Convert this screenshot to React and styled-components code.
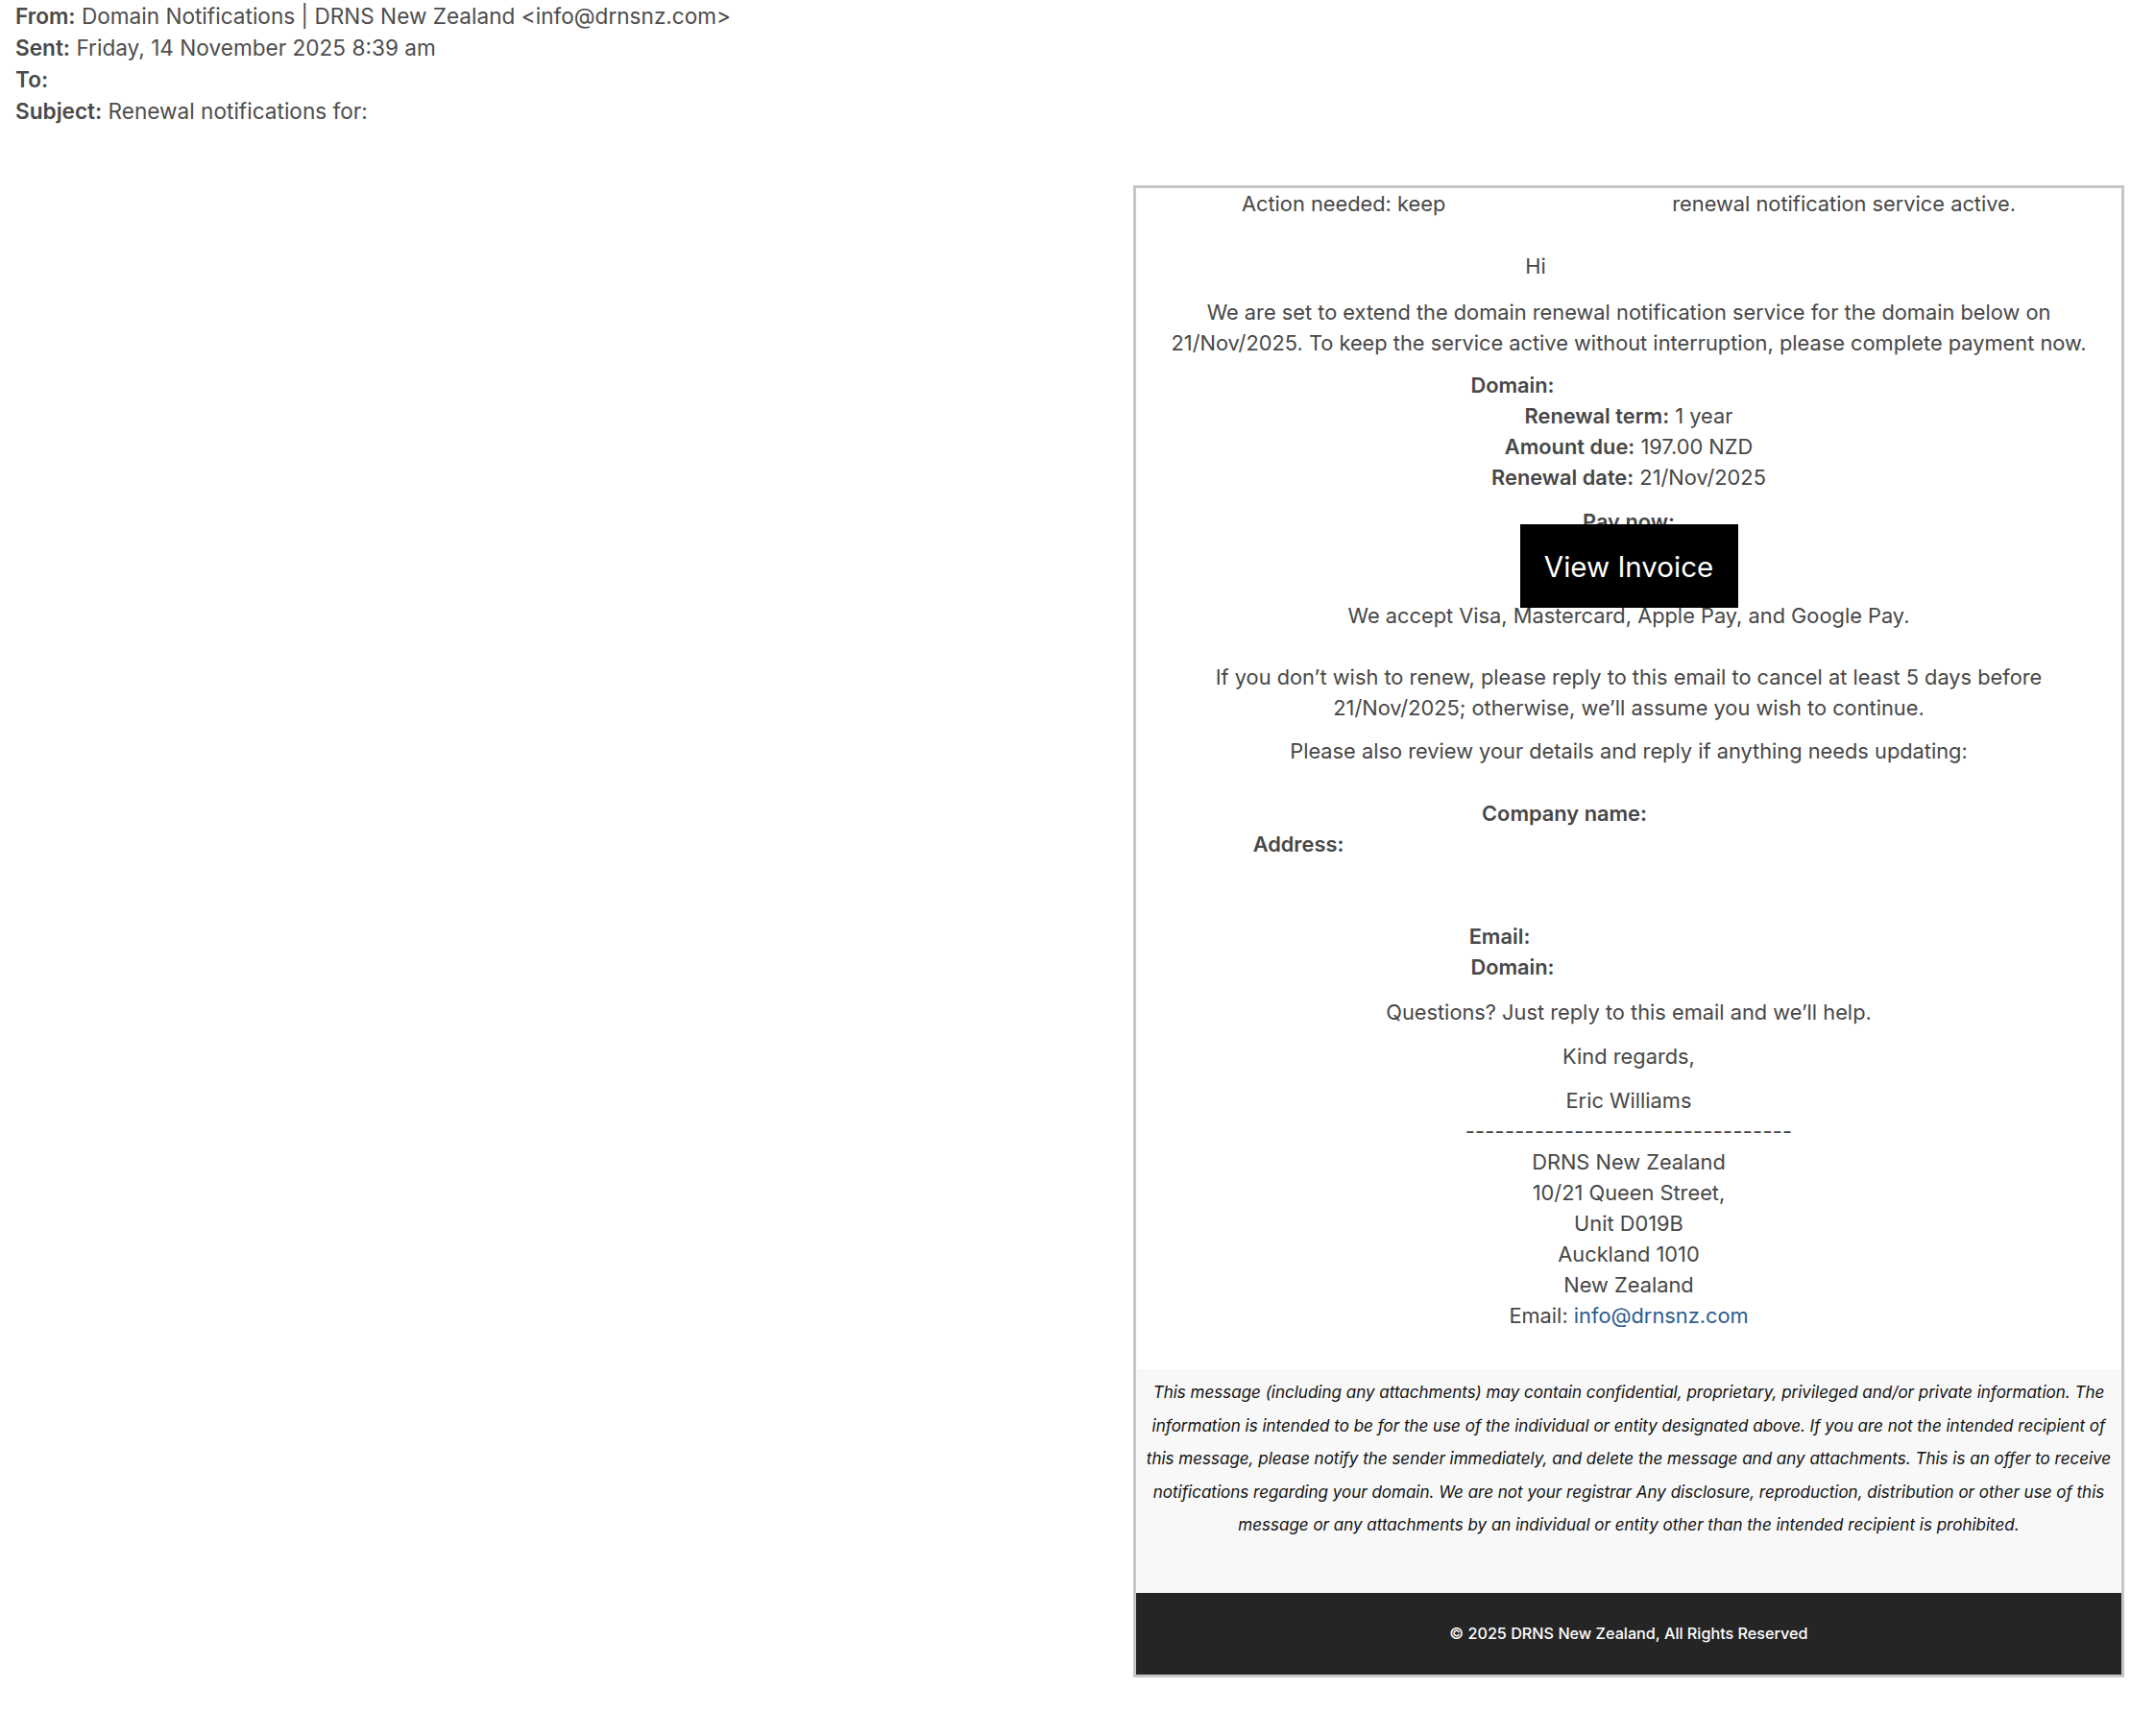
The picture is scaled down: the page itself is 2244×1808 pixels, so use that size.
import React from 'react';
import styled, { createGlobalStyle } from 'styled-components';

const GlobalStyle = createGlobalStyle`
    html, body {
        margin: 0;
        padding: 0;
        background: #ffffff;
    }

    body {
        font-family: Inter, "Liberation Sans", Arial, sans-serif;
        color: #4a4a4a;
    }
`

const Page = styled.div`
    display: flex;
    flex-direction: column;
    padding: 0 32px 60px 16px;
`

const Headers = styled.div`
    font-size: 22.6px;
    line-height: 33px;
    color: #4d4d4d;
`

const HeaderLine = styled.div`
    & > b {
        font-weight: 600;
        color: #4a4a4a;
    }
`

const Panel = styled.div`
    align-self: flex-end;
    width: 1026px;
    margin-top: 61px;
    border: 3px solid #c6c6c6;
    background: #ffffff;
`

const Body = styled.div`
    text-align: center;
    font-size: 21.8px;
    line-height: 32px;
    color: #474747;
    padding-bottom: 36px;
`

const Para = styled.p`
    margin: 0 0 ${p => p.gap || 14}px;
`

const Line = styled.div`
    min-height: 32px;
`

const Label = styled.b`
    font-weight: 600;
`

const Redacted = styled.span`
    display: inline-block;
    width: ${p => p.w}px;
`

const Dashes = styled.div`
    min-height: 32px;
    letter-spacing: 0.3px;
`

const PayNow = styled.div`
    height: 32px;
    margin-top: 14px;
    font-weight: 600;
`

const InvoiceButton = styled.a`
    position: relative;
    display: inline-flex;
    align-items: center;
    justify-content: center;
    width: 227px;
    height: 87px;
    margin: -13px auto -8px;
    background: #000000;
    color: #ffffff;
    font-size: 29.5px;
    text-decoration: none;
`

const ButtonRow = styled.div`
    display: flex;
    justify-content: center;
`

const Link = styled.a`
    color: #2c5d92;
    text-decoration: none;
`

const Disclaimer = styled.div`
    margin-top: 4px;
    background: #f8f8f8;
    padding: 7px 4px 53px;
    text-align: center;
    font-size: 17px;
    line-height: 34.5px;
    font-style: italic;
    color: #111111;
`

const Footer = styled.div`
    height: 85px;
    display: flex;
    align-items: center;
    justify-content: center;
    background: #252525;
    color: #ffffff;
    font-size: 16.2px;
    font-weight: 500;
`

const details = [
    ['Renewal term:', '1 year'],
    ['Amount due:', '197.00 NZD'],
    ['Renewal date:', '21/Nov/2025'],
];

const signature = [
    'DRNS New Zealand',
    '10/21 Queen Street,',
    'Unit D019B',
    'Auckland 1010',
    'New Zealand',
];

export default function App() {
    return (
        <Page>
            <GlobalStyle />
            <Headers>
                <HeaderLine><b>From:</b> Domain Notifications | DRNS New Zealand &lt;info@drnsnz.com&gt;</HeaderLine>
                <HeaderLine><b>Sent:</b> Friday, 14 November 2025 8:39 am</HeaderLine>
                <HeaderLine><b>To:</b></HeaderLine>
                <HeaderLine><b>Subject:</b> Renewal notifications for:</HeaderLine>
            </Headers>

            <Panel>
                <Body>
                    <Para gap={33}>Action needed: keep<Redacted w={236} />renewal notification service active.</Para>
                    <Para gap={16}>Hi<Redacted w={194} /></Para>
                    <Para gap={12}>
                        We are set to extend the domain renewal notification service for the domain below on<br />
                        21/Nov/2025. To keep the service active without interruption, please complete payment now.
                    </Para>
                    <Line><Label>Domain:</Label><Redacted w={242} /></Line>
                    {details.map(([label, value]) => (
                        <Line key={label}><Label>{label}</Label> {value}</Line>
                    ))}
                    <PayNow>Pay now:</PayNow>
                    <ButtonRow>
                        <InvoiceButton href="#">View Invoice</InvoiceButton>
                    </ButtonRow>
                    <Para gap={32}>We accept Visa, Mastercard, Apple Pay, and Google Pay.</Para>
                    <Para gap={13}>
                        If you don’t wish to renew, please reply to this email to cancel at least 5 days before<br />
                        21/Nov/2025; otherwise, we’ll assume you wish to continue.
                    </Para>
                    <Para gap={33}>Please also review your details and reply if anything needs updating:</Para>
                    <Line><Label>Company name:</Label><Redacted w={134} /></Line>
                    <Line><Label>Address:</Label><Redacted w={688} /></Line>
                    <Line />
                    <Line />
                    <Line><Label>Email:</Label><Redacted w={269} /></Line>
                    <Para gap={15}><Label>Domain:</Label><Redacted w={242} /></Para>
                    <Para>Questions? Just reply to this email and we’ll help.</Para>
                    <Para>Kind regards,</Para>
                    <Line>Eric Williams</Line>
                    <Dashes>---------------------------------</Dashes>
                    {signature.map(text => <Line key={text}>{text}</Line>)}
                    <Line>Email: <Link href="#">info@drnsnz.com</Link></Line>
                </Body>
                <Disclaimer>
                    This message (including any attachments) may contain confidential, proprietary, privileged and/or private information. The information is intended to be for the use of the individual or entity designated above. If you are not the intended recipient of this message, please notify the sender immediately, and delete the message and any attachments. This is an offer to receive notifications regarding your domain. We are not your registrar Any disclosure, reproduction, distribution or other use of this message or any attachments by an individual or entity other than the intended recipient is prohibited.
                </Disclaimer>
                <Footer>© 2025 DRNS New Zealand, All Rights Reserved</Footer>
            </Panel>
        </Page>
    );
}
